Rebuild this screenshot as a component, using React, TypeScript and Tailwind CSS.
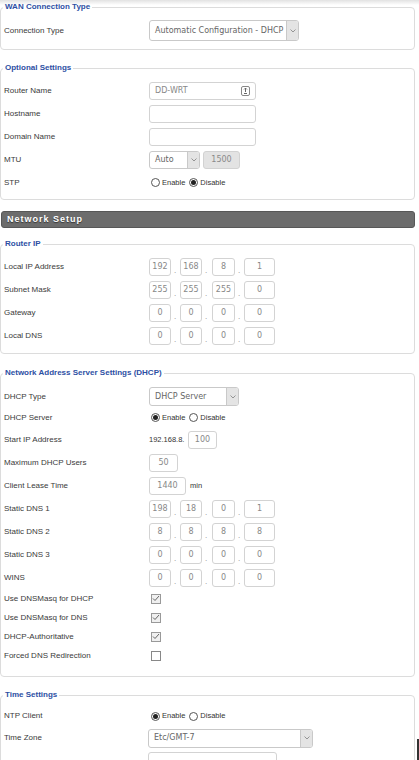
import React from 'react';

const mono = "font-['DejaVu_Sans',Verdana,sans-serif]";

function Group({
  title,
  className,
  children,
}: {
  title: string;
  className: string;
  children: React.ReactNode;
}) {
  return (
    <fieldset className={`w-[415px] rounded-[4px] border border-[#dcdcdc] pl-[3px] ${className}`}>
      <legend className="ml-[-1px] px-[2px] text-[8px] font-bold leading-[10px] text-[#2d4fa3]">
        {title}
      </legend>
      {children}
    </fieldset>
  );
}

function Row({ label, h, children }: { label: string; h: string; children?: React.ReactNode }) {
  return (
    <div className={`flex items-center ${h}`}>
      <div className="w-[145px] shrink-0 text-[8px] leading-none text-[#3a3a3a]">{label}</div>
      {children}
    </div>
  );
}

function Select({ value, w, h }: { value: string; w: string; h: string }) {
  return (
    <div className={`flex overflow-hidden rounded-[3px] border border-[#c9c9c9] bg-white ${w} ${h}`}>
      <div className={`flex flex-1 items-center pl-[5px] text-[8px] text-[#666] ${mono}`}>{value}</div>
      <div className="flex w-[12px] items-center justify-center border-l border-[#c9c9c9] bg-[#e4e4e4]">
        <svg width="6" height="4" viewBox="0 0 6 4">
          <path d="M0.5 0.5 L3 3 L5.5 0.5" stroke="#8a8a8a" strokeWidth="0.9" fill="none" />
        </svg>
      </div>
    </div>
  );
}

function Box({
  w,
  value,
  center = true,
  disabled = false,
  children,
}: {
  w: string;
  value?: string;
  center?: boolean;
  disabled?: boolean;
  children?: React.ReactNode;
}) {
  return (
    <div
      className={`flex h-[18px] items-center rounded-[3px] border text-[8px] ${mono} ${w} ${
        center ? 'justify-center' : 'justify-between pl-[5px] pr-[5px]'
      } ${disabled ? 'border-[#d2d2d2] bg-[#e3e3e3] text-[#8a8a8a]' : 'border-[#d3d3d3] bg-white text-[#888]'}`}
    >
      {value}
      {children}
    </div>
  );
}

function Ip({ parts }: { parts: string[] }) {
  return (
    <div className="flex items-end">
      <Box w="w-[22px]" value={parts[0]} />
      <span className="w-[9px] pl-[3px] text-[8px] leading-[10px] text-[#888]">.</span>
      <Box w="w-[22px]" value={parts[1]} />
      <span className="w-[10px] pl-[3px] text-[8px] leading-[10px] text-[#888]">.</span>
      <Box w="w-[23px]" value={parts[2]} />
      <span className="w-[9px] pl-[3px] text-[8px] leading-[10px] text-[#888]">.</span>
      <Box w="w-[31px]" value={parts[3]} />
    </div>
  );
}

function Radio({ on }: { on: boolean }) {
  return (
    <span className="flex h-[9px] w-[9px] items-center justify-center rounded-full border border-[#555] bg-white">
      {on && <span className="h-[5px] w-[5px] rounded-full bg-[#222]" />}
    </span>
  );
}

function RadioPair({ enabled }: { enabled: boolean }) {
  return (
    <div className="flex items-center pl-[2px] text-[7.5px] leading-none text-[#333]">
      <Radio on={enabled} />
      <span className="ml-[2px]">Enable</span>
      <span className="ml-[4px]">
        <Radio on={!enabled} />
      </span>
      <span className="ml-[2px]">Disable</span>
    </div>
  );
}

function Check({ on }: { on: boolean }) {
  return (
    <span
      className={`ml-[2px] flex h-[10px] w-[10px] items-center justify-center border ${
        on ? 'border-[#999] bg-[#f0f0f0]' : 'border-[#888] bg-white'
      }`}
    >
      {on && (
        <svg width="8" height="7" viewBox="0 0 8 7">
          <path d="M1 3.5 L3 5.5 L7 1" stroke="#666" strokeWidth="1" fill="none" />
        </svg>
      )}
    </span>
  );
}

export default function App() {
  return (
    <div className="relative h-[760px] w-[419px] overflow-hidden bg-white bg-[linear-gradient(to_bottom,#e2e2e2,#ffffff_5px)] pt-[2px] font-['Liberation_Sans',Arial,sans-serif]">
      <Group title="WAN Connection Type" className="pt-[8px] pb-[8px]">
        <Row label="Connection Type" h="h-[21px]">
          <Select value="Automatic Configuration - DHCP" w="w-[150px]" h="h-[21px]" />
        </Row>
      </Group>

      <Group title="Optional Settings" className="mt-[13px] pt-[6px] pb-[5px]">
        <Row label="Router Name" h="h-[23px]">
          <Box w="w-[107px]" value="DD-WRT" center={false}>
            <svg width="9" height="10" viewBox="0 0 9 10">
              <rect x="0.5" y="0.5" width="8" height="9" rx="1.5" fill="#fff" stroke="#888" />
              <path d="M4.5 2 L4.5 6" stroke="#666" strokeWidth="1" />
              <path d="M3 3.5 L4.5 2 L6 3.5" stroke="#666" strokeWidth="0.8" fill="none" />
              <rect x="3" y="7" width="3" height="1" fill="#666" />
            </svg>
          </Box>
        </Row>
        <Row label="Hostname" h="h-[23px]">
          <Box w="w-[107px]" />
        </Row>
        <Row label="Domain Name" h="h-[23px]">
          <Box w="w-[107px]" />
        </Row>
        <Row label="MTU" h="h-[23px]">
          <Select value="Auto" w="w-[51px]" h="h-[18px]" />
          <div className="ml-[3px]">
            <Box w="w-[37px]" value="1500" disabled />
          </div>
        </Row>
        <Row label="STP" h="h-[23px]">
          <RadioPair enabled={false} />
        </Row>
      </Group>

      <div className="ml-[1px] mt-[11px] flex h-[17px] w-[414px] items-center rounded-[3px] border border-[#575757] bg-[#6c6c6c] pl-[5px] text-[9px] font-bold tracking-[1px] text-white [text-shadow:0_1px_1px_#333]">
        Network Setup
      </div>

      <Group title="Router IP" className="mt-[11px] pt-[6px] pb-[6px]">
        <Row label="Local IP Address" h="h-[23px]">
          <Ip parts={['192', '168', '8', '1']} />
        </Row>
        <Row label="Subnet Mask" h="h-[23px]">
          <Ip parts={['255', '255', '255', '0']} />
        </Row>
        <Row label="Gateway" h="h-[23px]">
          <Ip parts={['0', '0', '0', '0']} />
        </Row>
        <Row label="Local DNS" h="h-[23px]">
          <Ip parts={['0', '0', '0', '0']} />
        </Row>
      </Group>

      <Group title="Network Address Server Settings (DHCP)" className="mt-[14px] pt-[8px] pb-[11px]">
        <Row label="DHCP Type" h="h-[21px]">
          <Select value="DHCP Server" w="w-[90px]" h="h-[19px]" />
        </Row>
        <Row label="DHCP Server" h="h-[21px]">
          <RadioPair enabled />
        </Row>
        <Row label="Start IP Address" h="h-[23px]">
          <span className="w-[39px] text-[7.5px] text-[#333]">192.168.8.</span>
          <Box w="w-[29px]" value="100" />
        </Row>
        <Row label="Maximum DHCP Users" h="h-[23px]">
          <Box w="w-[29px]" value="50" />
        </Row>
        <Row label="Client Lease Time" h="h-[23px]">
          <Box w="w-[37px]" value="1440" />
          <span className="ml-[4px] text-[7.5px] text-[#333]">min</span>
        </Row>
        <Row label="Static DNS 1" h="h-[23px]">
          <Ip parts={['198', '18', '0', '1']} />
        </Row>
        <Row label="Static DNS 2" h="h-[23px]">
          <Ip parts={['8', '8', '8', '8']} />
        </Row>
        <Row label="Static DNS 3" h="h-[23px]">
          <Ip parts={['0', '0', '0', '0']} />
        </Row>
        <Row label="WINS" h="h-[23px]">
          <Ip parts={['0', '0', '0', '0']} />
        </Row>
        <Row label="Use DNSMasq for DHCP" h="h-[19px]">
          <Check on />
        </Row>
        <Row label="Use DNSMasq for DNS" h="h-[19px]">
          <Check on />
        </Row>
        <Row label="DHCP-Authoritative" h="h-[19px]">
          <Check on />
        </Row>
        <Row label="Forced DNS Redirection" h="h-[19px]">
          <Check on={false} />
        </Row>
      </Group>

      <Group title="Time Settings" className="mt-[13px] pt-[5px] pb-[10px]">
        <Row label="NTP Client" h="h-[22px]">
          <RadioPair enabled />
        </Row>
        <Row label="Time Zone" h="h-[22px]">
          <div className="ml-[-1px]">
            <Select value="Etc/GMT-7" w="w-[165px]" h="h-[19px]" />
          </div>
        </Row>
        <div className="flex pt-[3px]">
          <div className="ml-[144px]">
            <Box w="w-[129px]" />
          </div>
        </div>
      </Group>

      <div className="absolute left-[417px] top-[739px] h-[21px] w-[1.5px] bg-[#333]" />
    </div>
  );
}
